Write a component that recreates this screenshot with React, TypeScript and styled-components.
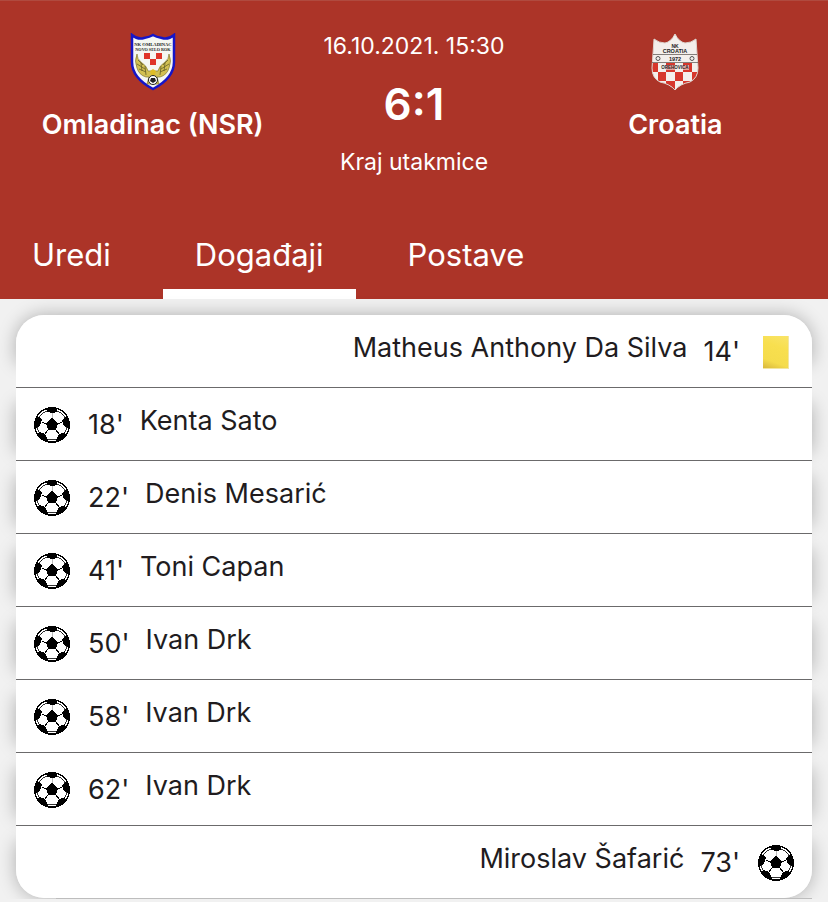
import React from "react";
import styled, { createGlobalStyle } from "styled-components";

const GlobalStyle = createGlobalStyle`
  * { box-sizing: border-box; }
  body { margin: 0; background: #f1f1f1; color: #211c1e; font-family: Inter, "Noto Sans", sans-serif; }
  button { font: inherit; color: inherit; border: 0; background: none; }
  h1, h2, p, ul { margin: 0; padding: 0; }
`;

const Header = styled.header`
  background: #ac3428;
  border-top: 1px solid #b04a3f;
  color: #fff;
`;

const Match = styled.section`
  display: grid;
  grid-template-columns: repeat(3, 1fr);
  padding: 32px 22px 0;
  text-align: center;
`;

const Team = styled.div`
  display: flex;
  flex-direction: column;
  align-items: center;
  gap: 18px;
  svg { display: block; }
`;

const TeamName = styled.h2`
  font-size: 27px;
  line-height: 32px;
  font-weight: 600;
  white-space: nowrap;
`;

const Result = styled.div`
  display: flex;
  flex-direction: column;
  gap: 16px;
`;

const Detail = styled.p`
  font-size: 23px;
  line-height: 26px;
`;

const Score = styled.h1`
  font-size: 44px;
  line-height: 58px;
  font-weight: 600;
`;

const Tabs = styled.nav`
  display: flex;
  gap: 20px;
  padding-top: 34px;
`;

const Tab = styled.button<{ $active?: boolean }>`
  height: 90px;
  padding: 0 32px;
  border-top: 10px solid transparent;
  border-bottom: 10px solid ${(p) => (p.$active ? "#fff" : "transparent")};
  font-size: 31px;
  cursor: pointer;
`;

const Events = styled.ul`
  isolation: isolate;
  margin: 16px 16px 0;
  list-style: none;
`;

const EventRow = styled.li<{ $away?: boolean }>`
  position: relative;
  display: flex;
  flex-direction: ${(p) => (p.$away ? "row-reverse" : "row")};
  align-items: center;
  gap: 16px;
  height: 73px;
  padding: 2px 16px 0;
  background: #fff;
  border-bottom: 1px solid #6b6a6b;
  font-size: 27px;
  line-height: 32px;

  &::before {
    content: "";
    position: absolute;
    z-index: -1;
    inset: 16px 0 8px;
    box-shadow: 0 0 18px rgba(0, 0, 0, 0.28);
  }
  &:first-child { border-radius: 28px 28px 0 0; }
  &:first-child::before { inset: 0 0 24px; border-radius: 28px 28px 0 0; }
  &:last-child { height: 72px; border-bottom: 0; border-radius: 0 0 28px 28px; }
  &:last-child::before { bottom: 0; border-radius: 0 0 28px 28px; }
`;

const Divider = styled.hr`
  position: relative;
  height: 1px;
  margin: 0 16px 0 56px;
  border: 0;
  background: #bdbdbd;
`;

const Mark = styled.span`
  display: flex;
  justify-content: center;
  width: 40px;
`;

const Player = styled.span`
  padding-bottom: 8px;
`;

const YellowCard = styled.span`
  width: 26px;
  height: 33px;
  background: linear-gradient(20deg, #d9b83c 0, #f5dc4c 24%, #f8df4f 65%, #f9e468 100%);
  border-right: 1px solid #f3e6a0;
  border-bottom: 1px solid #f3e6a0;
`;

const Ball = () => (
  <svg width="38" height="38" viewBox="0 0 38 38" role="img" aria-label="Gol" shapeRendering="crispEdges">
    <defs><clipPath id="ball"><circle cx="19" cy="19" r="17.5" /></clipPath></defs>
    <circle cx="19" cy="19" r="17.5" fill="#fff" />
    <g clipPath="url(#ball)">
      <path d="M13 1h12l-1 5-5 1-5-1zM1 12l5-1 3 3-2 6-6 3zM37 12l-5-1-3 3 2 6 6 3zM6 26l6 2 3 6-2 4-9-6zM32 26l-6 2-3 6 2 4 9-6z" />
      <path d="M19 12l6 5-2 7h-8l-2-7z" />
      <path d="M9 16l4 2M29 16l-4 2M15 24l-3 4M23 24l3 4" stroke="#000" fill="none" />
      <path d="M19 7v5" stroke="#bbb" />
      <circle cx="19" cy="19" r="15" stroke="#000" strokeWidth=".8" fill="none" />
    </g>
    <circle cx="19" cy="19" r="17.3" fill="none" stroke="#000" strokeWidth="1.5" />
  </svg>
);

const OmladinacCrest = () => (
  <svg width="46" height="58" viewBox="0 0 46 58" role="img" aria-label="NK Omladinac Novo Selo Rok">
    <path d="M2 2q6 5 12 3 6-1 9-3 3 2 9 3 6 2 12-3v27q0 16-21 27Q2 45 2 29z" fill="#f5f7f2" stroke="#1515c8" strokeWidth="2.5" />
    <g fill="#222" fontFamily="Liberation Serif" fontWeight="700" textAnchor="middle">
      <text x="23" y="13" fontSize="4.6">NK OMLADINAC</text>
      <text x="23" y="17.5" fontSize="4.2">NOVO SELO ROK</text>
    </g>
    <path d="M14 20h6v6h-6zM26 20h6v6h-6zM20 26h6v6h-6z" fill="#df3529" />
    <path d="M7 21q0 5 4 8 6 4 7 9h10q1-5 7-9 4-3 4-8 3 7 0 14-2 7-9 9h-3l2 7H17l2-7h-3q-7-2-9-9-3-7 0-14z" fill="#d2c052" stroke="#827a35" strokeWidth=".7" />
    <path d="M8 27l5 5M7 31l8 5M9 36l7 3M11 30l1 8M15 33l1 9M38 27l-5 5M39 31l-8 5M37 36l-7 3M35 30l-1 8M31 33l-1 9" stroke="#655f28" strokeWidth=".8" />
    <path d="M20 38l3-2 3 2-1 4h-4z" fill="#e0bd28" />
    <circle cx="23" cy="47" r="4.5" fill="#fff" stroke="#222" />
    <path d="M21 45h4l1 3-3 2-3-2z" fill="#222" />
  </svg>
);

const CroatiaCrest = () => (
  <svg width="50" height="58" viewBox="0 0 50 58" role="img" aria-label="NK Croatia Orehovica">
    <defs><clipPath id="shield"><path d="M25 1q4 8 10 9 6 0 11-4l2 29q0 10-8 14-10 2-15 8-5-6-15-8-8-4-8-14L4 6q5 4 11 4 6-1 10-9z" /></clipPath></defs>
    <g clipPath="url(#shield)">
      <path d="M0 0h50v58H0z" fill="#f4efec" />
      <path d="M0 30h8v9H0zM16 30h9v9h-9zM33 30h9v9h-9zM8 39h8v9H8zM25 39h8v9h-8zM42 39h8v9h-8zM16 48h9v10h-9zM33 48h9v10h-9z" fill="#d7372c" />
      <path d="M11 32h28v5H11z" fill="#f4efec" opacity=".6" />
    </g>
    <path d="M25 1q4 8 10 9 6 0 11-4l2 29q0 10-8 14-10 2-15 8-5-6-15-8-8-4-8-14L4 6q5 4 11 4 6-1 10-9z" fill="none" stroke="#ded4ce" />
    <path d="M3 21.5h44M2 29.5h46" stroke="#554d49" strokeWidth=".7" />
    <g fill="none" stroke="#555"><circle cx="8" cy="25.5" r="2" /><circle cx="42" cy="25.5" r="2" /></g>
    <g fill="#222" fontFamily="Liberation Sans" fontWeight="700" textAnchor="middle">
      <text x="25" y="15" fontSize="5">NK</text>
      <text x="25" y="20" fontSize="5.5">CROATIA</text>
      <text x="25" y="27.5" fontSize="5.5">1972</text>
      <text x="25" y="36" fontSize="4.5">OREHOVICA</text>
    </g>
  </svg>
);

type MatchEvent = { player: string; minute: number; away?: boolean; card?: boolean };

const events: MatchEvent[] = [
  { player: "Matheus Anthony Da Silva", minute: 14, away: true, card: true },
  { player: "Kenta Sato", minute: 18 },
  { player: "Denis Mesarić", minute: 22 },
  { player: "Toni Capan", minute: 41 },
  { player: "Ivan Drk", minute: 50 },
  { player: "Ivan Drk", minute: 58 },
  { player: "Ivan Drk", minute: 62 },
  { player: "Miroslav Šafarić", minute: 73, away: true },
];

export default function App() {
  return (
    <>
      <GlobalStyle />
      <Header>
        <Match>
          <Team><OmladinacCrest /><TeamName>Omladinac (NSR)</TeamName></Team>
          <Result>
            <Detail>16.10.2021. 15:30</Detail>
            <Score>6:1</Score>
            <Detail>Kraj utakmice</Detail>
          </Result>
          <Team><CroatiaCrest /><TeamName>Croatia</TeamName></Team>
        </Match>
        <Tabs>
          <Tab>Uredi</Tab>
          <Tab $active aria-current="page">Događaji</Tab>
          <Tab>Postave</Tab>
        </Tabs>
      </Header>
      <main>
        <Events>
          {events.map((e) => (
            <EventRow key={e.minute} $away={e.away}>
              <Mark>{e.card ? <YellowCard role="img" aria-label="Žuti karton" /> : <Ball />}</Mark>
              <span>{e.minute}'</span>
              <Player>{e.player}</Player>
            </EventRow>
          ))}
        </Events>
        <Divider />
      </main>
    </>
  );
}
